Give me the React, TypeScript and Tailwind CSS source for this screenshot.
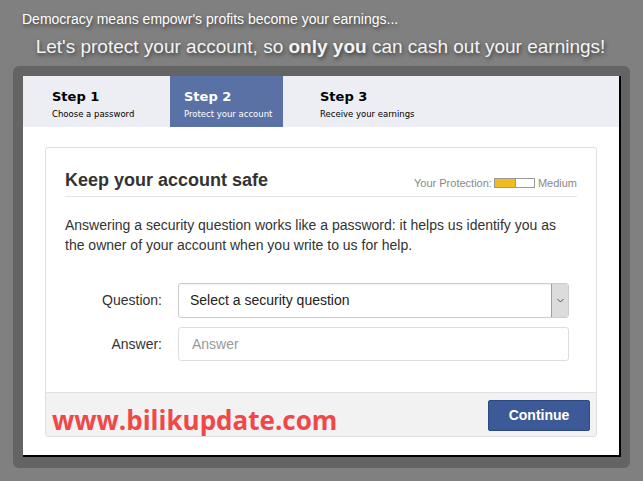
import React from "react";

export default function App() {
  return (
    <div
      className="w-[643px] h-[481px] bg-[#808080] overflow-hidden flex flex-col"
      style={{ fontFamily: '"Liberation Sans", Arial, sans-serif' }}
    >
      <div className="pl-[22px] pt-[10px] text-white text-[14px] leading-[18px] [text-shadow:1px_2px_4px_rgba(0,0,0,0.6)]">
        Democracy means empowr's profits become your earnings...
      </div>
      <div className="mt-[7px] text-center text-[#f4f4f4] text-[19px] leading-[23px] pr-[2px] [text-shadow:1px_2px_4px_rgba(0,0,0,0.6)]">
        Let's protect your account, so <b>only you</b> can cash out your earnings!
      </div>
      <div className="mt-[8px] mx-[13px] h-[402px] bg-[#646464] rounded-[6px] pt-[10px] pl-[10px] pr-[9px] pb-[11px] flex">
        <div className="flex-1 bg-white border-r-2 border-b-2 border-black flex flex-col">
          <div className="h-[51px] bg-[#edeef3] flex pl-[15px]">
            <div className="w-[132px] pl-[14px] pt-[13px]">
              <div className="text-[13px] leading-[16px] font-bold text-black" style={{ fontFamily: '"DejaVu Sans", Verdana, sans-serif' }}>Step 1</div>
              <div className="text-[8.5px] leading-[14px] mt-[2px] text-black" style={{ fontFamily: '"DejaVu Sans", Verdana, sans-serif' }}>Choose a password</div>
            </div>
            <div className="w-[113px] bg-[#5a71a6] pl-[14px] pt-[13px]">
              <div className="text-[13px] leading-[16px] font-bold text-white" style={{ fontFamily: '"DejaVu Sans", Verdana, sans-serif' }}>Step 2</div>
              <div className="text-[8.5px] leading-[14px] mt-[2px] text-white" style={{ fontFamily: '"DejaVu Sans", Verdana, sans-serif' }}>Protect your account</div>
            </div>
            <div className="pl-[37px] pt-[13px]">
              <div className="text-[13px] leading-[16px] font-bold text-black" style={{ fontFamily: '"DejaVu Sans", Verdana, sans-serif' }}>Step 3</div>
              <div className="text-[8.5px] leading-[14px] mt-[2px] text-black" style={{ fontFamily: '"DejaVu Sans", Verdana, sans-serif' }}>Receive your earnings</div>
            </div>
          </div>
          <div className="mx-[22px] mt-[20px] h-[290px] border border-[#dddfe2] rounded-[3px] flex flex-col overflow-hidden">
            <div className="flex-1 px-[19px] pt-[20px]">
              <div className="flex items-end justify-between border-b border-[#e5e5e5] pb-[4px]">
                <div className="text-[18px] leading-[24px] font-bold text-[#333]">Keep your account safe</div>
                <div className="flex items-center text-[11px] text-[#888] pb-[1px]">
                  <span>Your Protection:</span>
                  <span className="ml-[2px] w-[41px] h-[10px] border border-[#999] bg-white flex">
                    <span className="w-[21px] bg-[#f1ba21] border-r border-[#999]"></span>
                  </span>
                  <span className="ml-[3px]">Medium</span>
                </div>
              </div>
              <p className="mt-[18px] text-[14px] leading-[20px] text-[#333]">
                Answering a security question works like a password: it helps us identify you as the owner of your account when you write to us for help.
              </p>
              <div className="mt-[28px] grid grid-cols-[97px_1fr] gap-x-[16px] gap-y-[9px] pr-[8px] items-center">
                <div className="text-right text-[14px] text-[#333]">Question:</div>
                <div className="h-[35px] border border-[#ccc] rounded-[3px] flex items-center justify-between pl-[11px] shadow-[inset_0_1px_1px_rgba(0,0,0,0.05)]">
                  <span className="text-[14px] text-[#222]">Select a security question</span>
                  <span className="w-[17px] h-[33px] bg-[#dcdcdc] border-l border-[#a0a0a0] flex items-center justify-center rounded-r-[2px]">
                    <svg width="7" height="5" viewBox="0 0 7 5"><path d="M0.5 1 L3.5 4 L6.5 1" fill="none" stroke="#555" strokeWidth="1" /></svg>
                  </span>
                </div>
                <div className="text-right text-[14px] text-[#333]">Answer:</div>
                <div className="h-[34px] border border-[#ddd] rounded-[3px] flex items-center pl-[13px]">
                  <span className="text-[14px] text-[#999]">Answer</span>
                </div>
              </div>
            </div>
            <div className="h-[44px] bg-[#f2f2f2] border-t border-[#e2e2e2] flex items-center justify-between pl-[6px] pr-[6px]">
              <span className="text-[26px] font-bold text-[#f04848] leading-none mt-[10px]" style={{ fontFamily: '"Open Sans", sans-serif' }}>www.bilikupdate.com</span>
              <button className="w-[102px] h-[31px] mt-[1px] bg-[#3d5a98] border border-[#2e4a86] rounded-[2px] text-white text-[14px] font-bold">Continue</button>
            </div>
          </div>
        </div>
      </div>
    </div>
  );
}
